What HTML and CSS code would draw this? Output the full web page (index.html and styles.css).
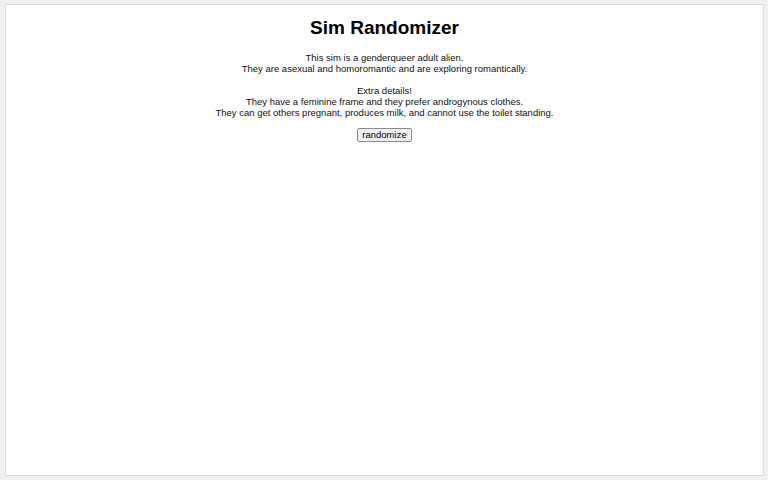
FILE: index.html
```html
<!DOCTYPE html>
<html lang="en">

<head>
    <meta charset="UTF-8">
    <meta name="viewport" content="width=device-width, initial-scale=1.0">
    <title>Sim Randomizer</title>
    <link rel="stylesheet" href="styles.css">
</head>

<body>
    <main class="pagina">
        <h1>Sim Randomizer</h1>

        <section class="resultado">
            <p>This sim is a genderqueer adult alien.</p>
            <p>They are asexual and homoromantic and are exploring romantically.</p>
        </section>

        <section class="resultado">
            <p>Extra details!</p>
            <p>They have a feminine frame and they prefer androgynous clothes.</p>
            <p>They can get others pregnant, produces milk, and cannot use the toilet standing.</p>
        </section>

        <button type="button" class="botao">randomize</button>
    </main>
</body>

</html>
```

FILE: styles.css
```css
* {
    margin: 0;
    padding: 0;
    box-sizing: border-box;
    font-family: "Liberation Sans", Arial, sans-serif;
}

html,
body {
    width: 100%;
    height: 100%;
}

body {
    background-color: #f1f1f1;
    padding: 4px 4px 4px 5px;
}

/* --------------------- Página --------------------- */

.pagina {
    height: 100%;
    background-color: #fff;
    border: 1px solid #dcdcdc;
    display: flex;
    flex-direction: column;
    align-items: center;
    padding-top: 12px;
    text-align: center;
    color: #111;
}

.pagina h1 {
    font-size: 19px;
    line-height: 22px;
    font-weight: bold;
    color: #000;
    margin-bottom: 13px;
}

.resultado {
    font-size: 9.5px;
    line-height: 11px;
    margin-bottom: 11px;
}

.botao {
    height: 14px;
    width: 55px;
    margin-top: -1px;
    font-size: 9.5px;
    line-height: 12px;
    background-color: #efefef;
    border: 1px solid #8a8a8a;
    border-radius: 2px;
    color: #000;
}
```
